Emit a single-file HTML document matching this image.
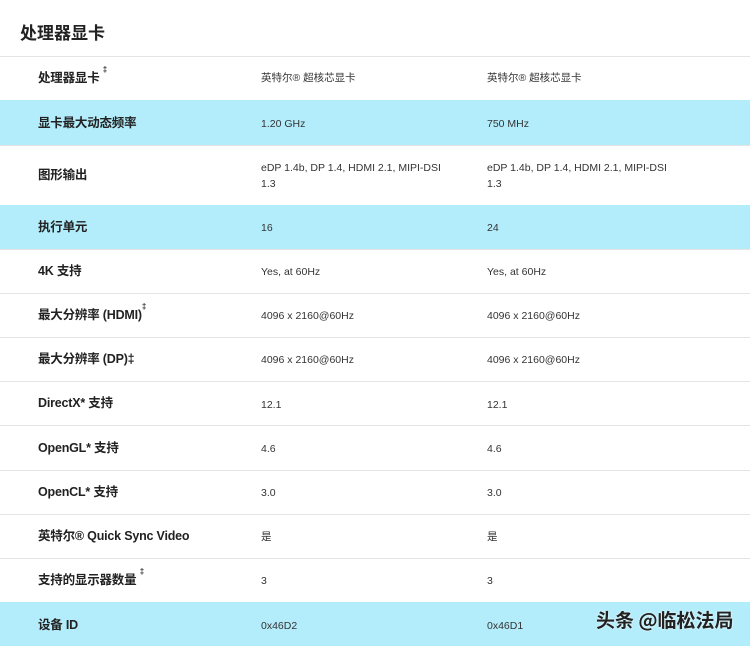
<!DOCTYPE html>
<html><head><meta charset="utf-8"><style>
body{margin:0;width:750px;height:646px;overflow:hidden;background:#fff;font-family:"Liberation Sans","Noto Sans CJK SC",sans-serif;color:#262626;position:relative}
h1{position:absolute;left:20px;top:19px;margin:0;font-size:17px;font-weight:bold;color:#222}
.row{position:absolute;left:0;width:750px;border-top:1px solid #e4e4e4;box-sizing:border-box}
.hl{background:#b3edfb;border-top-color:#b3edfb}
.l{position:absolute;left:38px;font-size:12.5px;font-weight:bold;color:#222;letter-spacing:-0.2px}
.v{position:absolute;font-size:10.5px;line-height:16px;color:#333;width:190px}
.c2{left:261px}.c3{left:487px}
sup{font-size:8px;vertical-align:top;position:relative;top:-2px}
.wm{position:absolute;left:596px;top:606px;font-size:19px;font-weight:bold;color:#222;font-family:"Noto Sans CJK SC",sans-serif;text-shadow:0 0 2px #fff}
</style></head><body>
<h1>处理器显卡</h1>
<div class="row" style="top:56px;height:44px"><span class="l" style="top:10px">处理器显卡 <sup>‡</sup></span><span class="v c2" style="top:13px">英特尔® 超核芯显卡</span><span class="v c3" style="top:13px">英特尔® 超核芯显卡</span></div>
<div class="row hl" style="top:100px;height:45px"><span class="l" style="top:11px">显卡最大动态频率</span><span class="v c2" style="top:15px">1.20 GHz</span><span class="v c3" style="top:15px">750 MHz</span></div>
<div class="row" style="top:145px;height:60px"><span class="l" style="top:18px">图形输出</span><span class="v c2" style="top:14px">eDP 1.4b, DP 1.4, HDMI 2.1, MIPI-DSI 1.3</span><span class="v c3" style="top:14px">eDP 1.4b, DP 1.4, HDMI 2.1, MIPI-DSI 1.3</span></div>
<div class="row hl" style="top:205px;height:44px"><span class="l" style="top:10px">执行单元</span><span class="v c2" style="top:14px">16</span><span class="v c3" style="top:14px">24</span></div>
<div class="row" style="top:249px;height:44px"><span class="l" style="top:10px">4K 支持</span><span class="v c2" style="top:14px">Yes, at 60Hz</span><span class="v c3" style="top:14px">Yes, at 60Hz</span></div>
<div class="row" style="top:293px;height:44px"><span class="l" style="top:10px">最大分辨率 (HDMI)<sup>‡</sup></span><span class="v c2" style="top:14px">4096 x 2160@60Hz</span><span class="v c3" style="top:14px">4096 x 2160@60Hz</span></div>
<div class="row" style="top:337px;height:44px"><span class="l" style="top:10px">最大分辨率 (DP)‡</span><span class="v c2" style="top:14px">4096 x 2160@60Hz</span><span class="v c3" style="top:14px">4096 x 2160@60Hz</span></div>
<div class="row" style="top:381px;height:44px"><span class="l" style="top:10px">DirectX* 支持</span><span class="v c2" style="top:15px">12.1</span><span class="v c3" style="top:15px">12.1</span></div>
<div class="row" style="top:425px;height:45px"><span class="l" style="top:11px">OpenGL* 支持</span><span class="v c2" style="top:15px">4.6</span><span class="v c3" style="top:15px">4.6</span></div>
<div class="row" style="top:470px;height:44px"><span class="l" style="top:10px">OpenCL* 支持</span><span class="v c2" style="top:14px">3.0</span><span class="v c3" style="top:14px">3.0</span></div>
<div class="row" style="top:514px;height:44px"><span class="l" style="top:10px">英特尔® Quick Sync Video</span><span class="v c2" style="top:14px">是</span><span class="v c3" style="top:14px">是</span></div>
<div class="row" style="top:558px;height:44px"><span class="l" style="top:10px">支持的显示器数量 <sup>‡</sup></span><span class="v c2" style="top:14px">3</span><span class="v c3" style="top:14px">3</span></div>
<div class="row hl" style="top:602px;height:44px"><span class="l" style="top:11px">设备 ID</span><span class="v c2" style="top:15px">0x46D2</span><span class="v c3" style="top:15px">0x46D1</span></div>
<div class="wm">头条 @临松法局</div>
</body></html>
